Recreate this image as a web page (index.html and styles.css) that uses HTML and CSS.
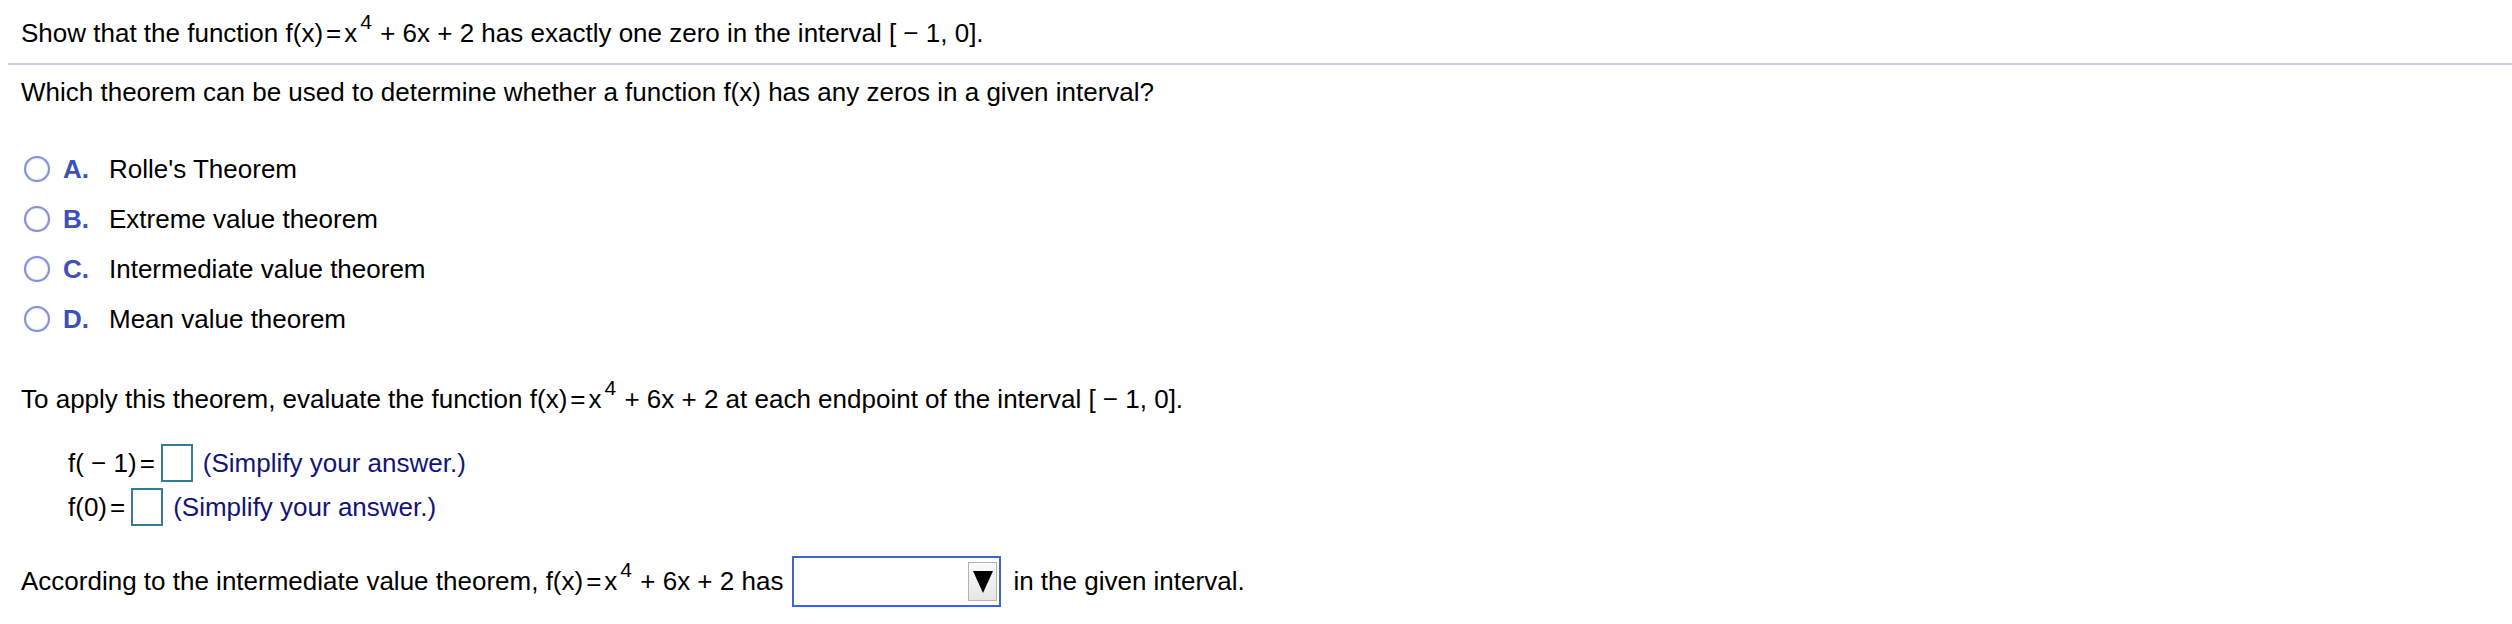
FILE: index.html
```html
<!DOCTYPE html>
<html lang="en">
<head>
    <meta charset="UTF-8">
    <title>Intermediate Value Theorem</title>
    <link rel="stylesheet" href="styles.css">
</head>
<body>
    <div class="question">
        <p class="prompt">Show that the function <span class="math">f(x)<span class="eq">=</span>x<sup>4</sup> + 6x + 2</span> has exactly one zero in the interval [ − 1, 0].</p>
    </div>
    <div class="divider"></div>

    <div class="part">
        <p class="prompt">Which theorem can be used to determine whether a function f(x) has any zeros in a given interval?</p>

        <ul class="choices">
            <li class="choice"><span class="radio"></span><span class="letter">A.</span><span class="label">Rolle's Theorem</span></li>
            <li class="choice"><span class="radio"></span><span class="letter">B.</span><span class="label">Extreme value theorem</span></li>
            <li class="choice"><span class="radio"></span><span class="letter">C.</span><span class="label">Intermediate value theorem</span></li>
            <li class="choice"><span class="radio"></span><span class="letter">D.</span><span class="label">Mean value theorem</span></li>
        </ul>

        <p class="prompt apply">To apply this theorem, evaluate the function <span class="math">f(x)<span class="eq">=</span>x<sup>4</sup> + 6x + 2</span> at each endpoint of the interval [ − 1, 0].</p>

        <div class="answers">
            <div class="answer-row">
                <span class="math">f( − 1)<span class="eq">=</span></span>
                <span class="answer-box"></span>
                <span class="hint">(Simplify your answer.)</span>
            </div>
            <div class="answer-row">
                <span class="math">f(0)<span class="eq">=</span></span>
                <span class="answer-box"></span>
                <span class="hint">(Simplify your answer.)</span>
            </div>
        </div>

        <div class="conclusion">
            <span>According to the intermediate value theorem, <span class="math">f(x)<span class="eq">=</span>x<sup>4</sup> + 6x + 2</span> has</span>
            <span class="dropdown"><span class="dropdown-btn"><span class="arrow"></span></span></span>
            <span>in the given interval.</span>
        </div>
    </div>
</body>
</html>
```

FILE: styles.css
```css
body {
    font-family: 'Liberation Sans', Arial, sans-serif;
    font-size: 26px;
    color: #000;
    margin: 0;
    background: #fff;
}
p {
    margin: 0;
}
.prompt {
    line-height: 30px;
}
.question {
    padding: 18px 0 0 21px;
}
.divider {
    margin: 15px 0 0 8px;
    height: 2px;
    background: #cdd0dc;
}
.part {
    padding: 12px 0 0 21px;
}
.math {
    white-space: nowrap;
}
.eq {
    margin: 0 3px;
}
sup {
    font-size: 21px;
    line-height: 0;
    vertical-align: 13px;
    margin: 0 1px 0 3px;
}
.choices {
    list-style: none;
    margin: 37px 0 0 0;
    padding: 0;
}
.choice {
    display: flex;
    align-items: center;
    height: 50px;
    line-height: 50px;
}
.radio {
    width: 22px;
    height: 22px;
    border: 2.5px solid #8592d6;
    border-radius: 50%;
    margin: 0 13px 0 3px;
    box-shadow: inset 0 0 2px #b5bde6, 0 0 1px #b5bde6;
}
.letter {
    color: #3c4fbd;
    font-weight: bold;
    width: 46px;
}
.apply {
    margin-top: 40px;
}
.answers {
    margin: 27px 0 0 47px;
}
.answer-row {
    display: flex;
    align-items: center;
    height: 44px;
}
.answer-box {
    width: 28px;
    height: 34px;
    border: 2px solid #3b7896;
    margin: 0 10px 0 3px;
}
.hint {
    color: #13137a;
}
.conclusion {
    display: flex;
    align-items: center;
    margin-top: 27px;
    white-space: nowrap;
}
.dropdown {
    display: flex;
    justify-content: flex-end;
    align-items: center;
    box-sizing: border-box;
    width: 209px;
    height: 51px;
    border: 2px solid #3d66c5;
    padding-right: 2px;
    margin: 0 12px 0 9px;
}
.dropdown-btn {
    display: flex;
    align-items: center;
    justify-content: center;
    box-sizing: border-box;
    width: 29px;
    height: 39px;
    border: 1px solid #b4b4b4;
    background: linear-gradient(#fafafa, #e6e6e6);
}
.arrow {
    width: 0;
    height: 0;
    border-left: 10px solid transparent;
    border-right: 10px solid transparent;
    border-top: 22px solid #000;
}
```
